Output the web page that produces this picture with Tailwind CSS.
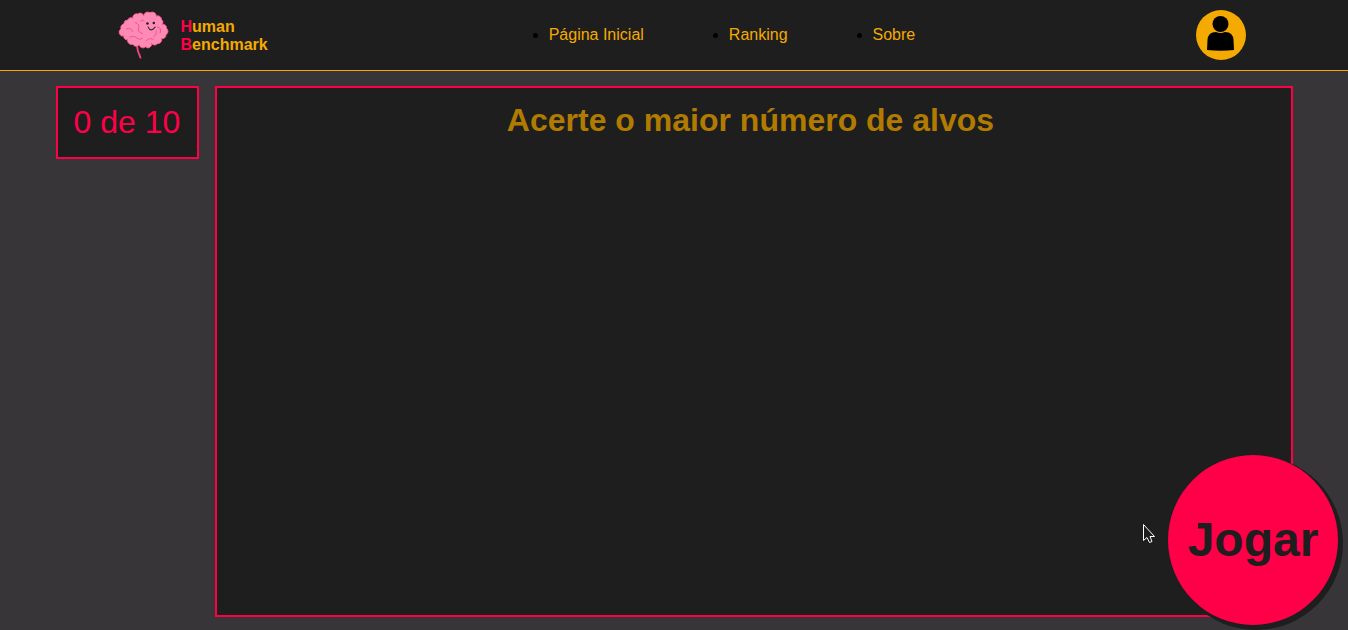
<!DOCTYPE html>
<html lang="pt-BR">
<head>
  <meta charset="UTF-8" />
  <meta name="viewport" content="width=device-width, initial-scale=1.0"/>
  <title>Human Benchmark</title>
  <script src="https://cdn.jsdelivr.net/npm/@tailwindcss/browser@4"></script>
</head>
<body class="relative h-[630px] overflow-hidden bg-[#373538] font-['Liberation_Sans',Arial,sans-serif]">

  <header class="flex h-[71px] items-center border-b border-[#f4aa00] bg-[#1e1e1e] pl-[115px] pr-[102px]">
    <div class="flex items-center">
      <svg class="h-[54px] w-[56px]" viewBox="-10 -2 176 166">
        <path d="M58 108 Q60 132 70 152" fill="none" stroke="#f0447f" stroke-width="6" stroke-linecap="round"/>
        <path d="M9 62 A12 12 0 0 1 18 46 A12 12 0 0 1 30 34 A11 11 0 0 1 46 28 A12 12 0 0 1 62 15 A11 11 0 0 1 80 21 A13 13 0 0 1 100 11 A13 13 0 0 1 120 22 A11 11 0 0 1 136 32 A11 11 0 0 1 138 48 A11 11 0 0 1 152 60 A12 12 0 0 1 150 80 A11 11 0 0 1 136 92 A12 12 0 0 1 124 108 A12 12 0 0 1 104 106 A11 11 0 0 1 86 118 A12 12 0 0 1 66 112 A12 12 0 0 1 46 110 A12 12 0 0 1 30 96 A10 10 0 0 1 18 84 A12 12 0 0 1 9 62Z" fill="#ff8ab5" stroke="#ff5c94" stroke-width="3" stroke-linejoin="round"/>
        <path d="M26 62 Q42 56 46 70 M54 42 Q68 46 64 60 Q60 72 76 76 M36 88 Q50 82 58 90 Q66 98 76 92 M82 36 Q74 30 70 38 M124 56 Q138 58 132 74 M112 86 Q122 80 120 68 M88 98 Q98 88 110 94" fill="none" stroke="#f0508a" stroke-width="3" stroke-linecap="round"/>
        <circle cx="92" cy="45" r="4" fill="#1e1e1e"/>
        <circle cx="112" cy="43" r="4" fill="#1e1e1e"/>
        <path d="M94 56 Q102 74 116 56" fill="none" stroke="#3a2a30" stroke-width="3.5" stroke-linecap="round"/>
      </svg>
      <p class="ml-[9.5px] mt-[2px] text-[16px] font-bold leading-[18px] text-[#f4aa00]">
        <span class="text-[#ff0048]">H</span>uman<br/>
        <span class="text-[#ff0048]">B</span>enchmark
      </p>
    </div>

    <ul class="ml-[281px] flex list-disc gap-[85px] text-[16px] text-black">
      <li><a href="#" class="text-[#f4aa00]">Página Inicial</a></li>
      <li><a href="#" class="text-[#f4aa00]">Ranking</a></li>
      <li><a href="#" class="text-[#f4aa00]">Sobre</a></li>
    </ul>

    <a href="#" class="ml-auto block h-[50px] w-[50px] rounded-full bg-[#f4aa00]">
      <svg class="h-[50px] w-[50px]" viewBox="0 0 50 50">
        <circle cx="24.5" cy="14" r="8"/>
        <path d="M11 40 L11.5 30 Q12 22 20 22 Q24.5 24 29 22 Q37 22 37.5 30 L38 40 Q24.5 41.5 11 40Z"/>
      </svg>
    </a>
  </header>

  <main class="flex items-start gap-4 pl-[56px] pt-[15px]">
    <div class="flex h-[73px] w-[143px] items-center justify-center border-2 border-[#ff0048] bg-[#1e1e1e] pb-[2px] pr-[1px] text-[32px] text-[#ff0048]">0 de 10</div>
    <section class="h-[531px] w-[1078px] border-2 border-[#ff0048] bg-[#1e1e1e] pr-[7px] pt-[14px] text-center">
      <h1 class="text-[32px] font-bold leading-[37px] text-[#b07b00]">Acerte o maior número de alvos</h1>
    </section>
  </main>

  <button class="absolute left-[1168px] top-[455px] h-[170px] w-[170px] rounded-full bg-[#ff0048] text-[48px] font-bold text-[#1e1e1e] shadow-[3px_3px_0_2px_#1e1e1e]">Jogar</button>

  <svg class="absolute left-[1142px] top-[523px] h-[21px] w-[14px]" viewBox="0 0 14 21">
    <path d="M1.5 1.5 L1.5 17.5 L5 14.5 L7.5 19.5 L10 18.5 L8 13.5 L12.5 13.5 Z" fill="#1e1e1e" stroke="#fff" stroke-width="1"/>
  </svg>

</body>
</html>
